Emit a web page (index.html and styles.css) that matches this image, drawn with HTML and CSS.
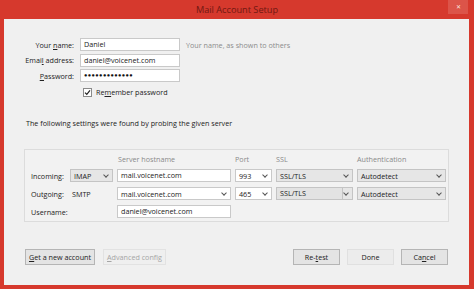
FILE: index.html
```html
<!DOCTYPE html>
<html lang="en">
<head>
<meta charset="UTF-8" />
<title>Mail Account Setup</title>
<link rel="stylesheet" href="styles.css">
</head>
<body>

<div class="window">
  <div class="titlebar">
    <span></span>
    <span class="title">Mail Account Setup</span>
    <span class="close">&#x2715;</span>
  </div>

  <div class="client">

    <div class="identity">
      <label class="lbl">Your <u>n</u>ame:</label>
      <div class="field">Daniel</div>
      <span class="hint">Your name, as shown to others</span>

      <label class="lbl">Emai<u>l</u> address:</label>
      <div class="field">daniel@voicenet.com</div>
      <span></span>

      <label class="lbl"><u>P</u>assword:</label>
      <div class="field dots">&#x25CF;&#x25CF;&#x25CF;&#x25CF;&#x25CF;&#x25CF;&#x25CF;&#x25CF;&#x25CF;&#x25CF;&#x25CF;&#x25CF;&#x25CF;</div>
      <span></span>
    </div>

    <div class="remember">
      <span class="check">
        <svg width="7" height="7" viewBox="0 0 7 7"><path d="M1 3.6 L2.8 5.4 L6 1.4" fill="none" stroke="#222" stroke-width="1.2"/></svg>
      </span>
      <span>Re<u>m</u>ember password</span>
    </div>

    <p class="info">The following settings were found by probing the given server</p>

    <div class="servers">
      <span></span>
      <span></span>
      <span class="head">Server hostname</span>
      <span class="head">Port</span>
      <span class="head">SSL</span>
      <span class="head">Authentication</span>

      <span class="rowlbl">Incoming:</span>
      <div class="combo gray"><span>IMAP</span><i class="chev"></i></div>
      <div class="field">mail.voicenet.com</div>
      <div class="combo"><span>993</span><i class="chev"></i></div>
      <div class="combo gray"><span>SSL/TLS</span><i class="chev"></i></div>
      <div class="combo gray"><span>Autodetect</span><i class="chev"></i></div>

      <span class="rowlbl">Outgoing:</span>
      <span class="plain">SMTP</span>
      <div class="combo"><span>mail.voicenet.com</span><i class="chev"></i></div>
      <div class="combo"><span>465</span><i class="chev"></i></div>
      <div class="combo gray split"><span class="inner">SSL/TLS</span><i class="chev"></i></div>
      <div class="combo gray"><span>Autodetect</span><i class="chev"></i></div>

      <span class="rowlbl">Username:</span>
      <span></span>
      <div class="field">daniel@voicenet.com</div>
    </div>

    <div class="buttons">
      <button class="btn wide"><u>G</u>et a new account</button>
      <button class="btn off"><u>A</u>dvanced config</button>
      <span class="spacer"></span>
      <button class="btn">Re-<u>t</u>est</button>
      <button class="btn soft">Done</button>
      <button class="btn">Ca<u>n</u>cel</button>
    </div>

  </div>
</div>

</body>
</html>
```

FILE: styles.css
```css
html, body {
  margin: 0;
  padding: 0;
}
body {
  width: 474px;
  height: 289px;
  overflow: hidden;
  font-family: "Open Sans", sans-serif;
  font-size: 7.2px;
  color: #222;
}
u {
  text-decoration-thickness: 0.5px;
  text-underline-offset: 1px;
}
.window {
  background: #d6392d;
  height: 289px;
  padding: 0 5px 4px 4px;
  box-sizing: border-box;
  display: flex;
  flex-direction: column;
}
.titlebar {
  height: 19px;
  display: grid;
  grid-template-columns: 1fr auto 1fr;
  align-items: start;
}
.title {
  color: #701812;
  font-size: 9.2px;
  line-height: 19px;
  padding-left: 1px;
}
.close {
  justify-self: end;
  width: 20px;
  height: 14px;
  margin-right: 1px;
  background: #dc5449;
  color: #fbe2df;
  font-size: 6px;
  line-height: 14px;
  text-align: center;
}
.client {
  flex: 1;
  background: #f0f0f0;
  padding: 19px 21px 0 21px;
  box-sizing: border-box;
}

.identity {
  display: grid;
  grid-template-columns: 49px 100px auto;
  column-gap: 6px;
  row-gap: 2.5px;
  align-items: center;
}
.lbl {
  text-align: right;
  white-space: nowrap;
}
.hint {
  color: #8c8c8c;
}
.field {
  height: 13px;
  box-sizing: border-box;
  border: 1px solid #c9c9c9;
  background: #fff;
  padding: 0 3px;
  line-height: 11px;
  white-space: nowrap;
  overflow: hidden;
}
.dots {
  font-size: 5.6px;
  letter-spacing: 0.4px;
  color: #111;
}

.remember {
  display: flex;
  align-items: center;
  gap: 4px;
  margin: 5px 0 0 58px;
}
.check {
  width: 7px;
  height: 7px;
  border: 1px solid #8a8a8a;
  background: #fff;
  display: flex;
}

.info {
  margin: 21px 0 0 1px;
}

.servers {
  margin: 21px 0 0 -1px;
  width: 425px;
  height: 73px;
  box-sizing: border-box;
  border: 1px solid #dcdcdc;
  background: #f2f2f2;
  padding: 4px 0 0 6px;
  display: grid;
  grid-template-columns: 35px 43px 114px 37px 77px 89px;
  grid-template-rows: 10px 13px 13px 13px;
  column-gap: 4px;
  row-gap: 5px;
  align-items: center;
}
.servers > .head {
  color: #8a8a8a;
}
.servers > .head:nth-child(3) {
  padding-left: 1px;
}
.rowlbl {
  white-space: nowrap;
}
.plain {
  padding-left: 2px;
}
.combo {
  height: 13px;
  box-sizing: border-box;
  border: 1px solid #c9c9c9;
  background: #fff;
  display: flex;
  align-items: center;
  justify-content: space-between;
  padding: 0 3px;
  white-space: nowrap;
}
.combo.gray {
  background: #e6e6e6;
  border-color: #c4c4c4;
}
.combo.split {
  padding-left: 0;
}
.combo.split .inner {
  height: 11px;
  line-height: 11px;
  width: 62px;
  padding-left: 3px;
  border-right: 1px solid #c4c4c4;
  background: #e3e3e3;
}
.chev {
  width: 3px;
  height: 3px;
  border-right: 1px solid #555;
  border-bottom: 1px solid #555;
  transform: rotate(45deg);
  margin: -2px 1px 0 0;
}

.buttons {
  display: flex;
  align-items: center;
  gap: 7px;
  margin-top: 27px;
}
.spacer {
  flex: 1;
}
.btn {
  height: 16px;
  width: 47px;
  box-sizing: border-box;
  border: 1px solid #b5b5b5;
  background: #e4e4e4;
  font-family: inherit;
  font-size: inherit;
  color: #222;
  padding: 0;
}
.btn.wide {
  width: 70px;
}
.btn.off {
  width: 63px;
  margin-left: 1px;
  color: #a5a5a5;
  background: #efefef;
  border-color: #e2e2e2;
}
.btn.soft {
  background: #ececec;
  border-color: #e0e0e0;
}
```
